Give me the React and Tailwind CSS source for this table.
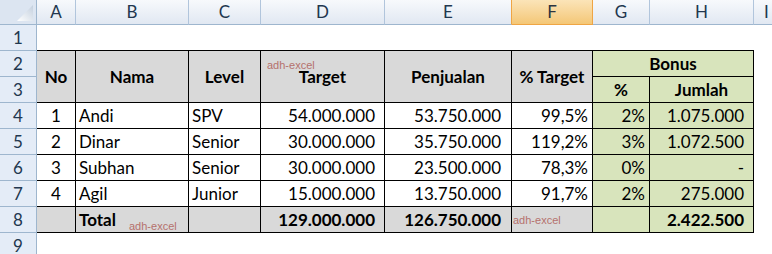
const font = { fontFamily: "Lato, 'Liberation Sans', sans-serif" };

// column header cell (A, B, C ...)
const ColHead = ({ label, active, orangeRight }) => (
  <div
    className={
      "flex items-center justify-center border-b text-[17px] leading-[20px] " +
      (active
        ? "border-r border-r-[#efa544] border-b-[#efa544] bg-linear-to-b from-[#fbe4b8] to-[#f4c776] text-[#2b3440]"
        : "border-r border-b-[#9eb6ce] bg-linear-to-b from-[#f7f9fc] to-[#e1e8f2] text-[#22374f] " +
          (orangeRight ? "border-r-[#efa544]" : "border-r-[#b1c5dc]"))
    }
  >
    {label}
  </div>
);

// row number on the left
const RowHead = ({ n }) => (
  <div className="flex items-center justify-center border-r border-b border-[#9eb6ce] bg-[#e4ecf7] text-[17px] leading-[20px] text-[#22374f]">
    {n}
  </div>
);

// plain empty sheet cell, gridlines are hidden
const Blank = ({ top }) => (
  <div className={top ? "border-b border-black" : ""} />
);

// bordered table cell
const Cell = ({ children, className = "" }) => (
  <div
    className={
      "relative flex items-center border-r border-b border-black text-[17px] leading-[20px] text-black " +
      className
    }
  >
    {children}
  </div>
);

// the little "adh-excel" watermark text boxes
const Mark = ({ className }) => (
  <span
    className={
      "absolute text-[11px] leading-[11px] font-normal text-[#b5716d] " + className
    }
    style={{ fontFamily: "'Liberation Sans', sans-serif" }}
  >
    adh-excel
  </span>
);

const rows = [
  [1, "Andi", "SPV", "54.000.000", "53.750.000", "99,5%", "2%", "1.075.000"],
  [2, "Dinar", "Senior", "30.000.000", "35.750.000", "119,2%", "3%", "1.072.500"],
  [3, "Subhan", "Senior", "30.000.000", "23.500.000", "78,3%", "0%", "-"],
  [4, "Agil", "Junior", "15.000.000", "13.750.000", "91,7%", "2%", "275.000"],
];

export default function App() {
  const gray = "bg-[#d9d9d9]";
  const green = "bg-[#d8e4bc]";

  return (
    <div className="w-[772px] h-[254px] overflow-hidden bg-white" style={font}>
      <div className="grid grid-cols-[37px_39px_113px_72px_124px_127px_81px_57px_104px_26px] grid-rows-[25px_repeat(9,26px)]">
        {/* corner */}
        <div className="border-r border-b border-[#9eb6ce] bg-[#dce5f1]">
          <svg width="36" height="24" viewBox="0 0 36 24">
            <defs>
              <linearGradient id="tri" x1="0" y1="1" x2="1" y2="0">
                <stop offset="0" stopColor="#ffffff" />
                <stop offset="1" stopColor="#c3cfde" />
              </linearGradient>
            </defs>
            <polygon points="17,21 33,21 33,5" fill="url(#tri)" />
          </svg>
        </div>
        <ColHead label="A" />
        <ColHead label="B" />
        <ColHead label="C" />
        <ColHead label="D" />
        <ColHead label="E" orangeRight />
        <ColHead label="F" active />
        <ColHead label="G" />
        <ColHead label="H" />
        <ColHead label="I" />

        {/* row 1 */}
        <RowHead n={1} />
        {Array.from({ length: 8 }).map((_, i) => (
          <Blank key={i} top />
        ))}
        <Blank />

        {/* rows 2-3: headers */}
        <RowHead n={2} />
        <Cell className={`row-span-2 justify-center font-bold ${gray}`}>No</Cell>
        <Cell className={`row-span-2 justify-center font-bold ${gray}`}>Nama</Cell>
        <Cell className={`row-span-2 justify-center font-bold ${gray}`}>Level</Cell>
        <Cell className={`row-span-2 justify-center font-bold ${gray}`}>
          <Mark className="left-[6px] top-[9px]" />
          Target
        </Cell>
        <Cell className={`row-span-2 justify-center font-bold ${gray}`}>Penjualan</Cell>
        <Cell className={`row-span-2 justify-center font-bold ${gray}`}>% Target</Cell>
        <Cell className={`col-span-2 justify-center font-bold ${green}`}>Bonus</Cell>
        <Blank />
        <RowHead n={3} />
        <Cell className={`justify-center font-bold ${green}`}>%</Cell>
        <Cell className={`justify-center font-bold ${green}`}>Jumlah</Cell>
        <Blank />

        {/* data rows */}
        {rows.map((r, i) => [
          <RowHead key={`h${i}`} n={i + 4} />,
          <Cell key={`a${i}`} className="justify-center">{r[0]}</Cell>,
          <Cell key={`b${i}`} className="pl-[3px]">{r[1]}</Cell>,
          <Cell key={`c${i}`} className="pl-[3px]">{r[2]}</Cell>,
          <Cell key={`d${i}`} className="justify-end pr-[9px]">{r[3]}</Cell>,
          <Cell key={`e${i}`} className="justify-end pr-[10px]">{r[4]}</Cell>,
          <Cell key={`f${i}`} className="justify-end pr-[4px]">{r[5]}</Cell>,
          <Cell key={`g${i}`} className={`justify-end pr-[4px] ${green}`}>{r[6]}</Cell>,
          <Cell key={`j${i}`} className={`justify-end pr-[9px] ${green}`}>{r[7]}</Cell>,
          <Blank key={`i${i}`} />,
        ])}

        {/* total row */}
        <RowHead n={8} />
        <Cell className={gray} />
        <Cell className={`pl-[3px] font-bold ${gray}`}>
          Total
          <Mark className="left-[53px] top-[14px]" />
        </Cell>
        <Cell className={gray} />
        <Cell className={`justify-end pr-[9px] font-bold ${gray}`}>129.000.000</Cell>
        <Cell className={`justify-end pr-[10px] font-bold ${gray}`}>126.750.000</Cell>
        <Cell className={gray}>
          <Mark className="left-[1px] top-[8px]" />
        </Cell>
        <Cell className={green} />
        <Cell className={`justify-end pr-[9px] font-bold ${green}`}>2.422.500</Cell>
        <Blank />

        {/* row 9 */}
        <RowHead n={9} />
        {Array.from({ length: 9 }).map((_, i) => (
          <Blank key={i} />
        ))}
      </div>
    </div>
  );
}
